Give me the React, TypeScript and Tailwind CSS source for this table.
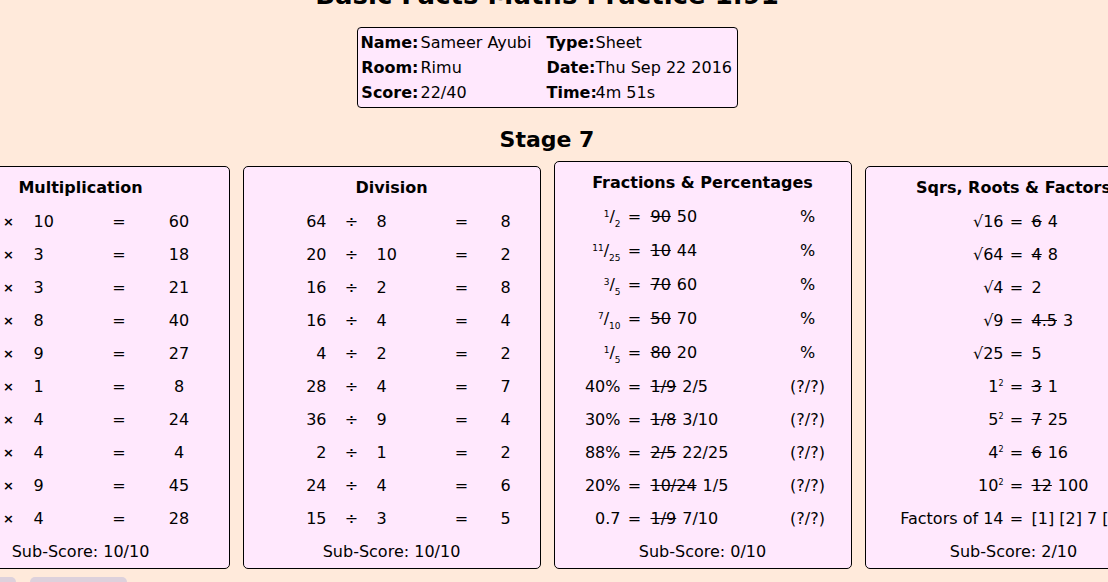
import type { ReactNode } from "react";

type Row = { left: ReactNode; wrong?: string; right: ReactNode; tail?: string };

const Sup = ({ children }: { children: ReactNode }) => (
  <span className="relative top-[-5px] text-[9px]">{children}</span>
);
const Sub = ({ children }: { children: ReactNode }) => (
  <span className="relative top-[5px] text-[9px]">{children}</span>
);
const Frac = ({ n, d }: { n: string; d: string }) => (
  <span>
    <Sup>{n}</Sup>/<Sub>{d}</Sub>
  </span>
);
const Sq = ({ n }: { n: string }) => (
  <span>
    {n}
    <span className="relative top-[-6px] text-[8px]">2</span>
  </span>
);

const Answer = ({ wrong, right }: { wrong?: string; right: ReactNode }) => (
  <>
    {wrong ? <span className="line-through mr-[6px]">{wrong}</span> : null}
    <span>{right}</span>
  </>
);

const multiplication = [
  [6, 10, 60], [6, 3, 18], [7, 3, 21], [5, 8, 40], [3, 9, 27],
  [8, 1, 8], [6, 4, 24], [1, 4, 4], [5, 9, 45], [7, 4, 28]
];

const division = [
  [64, 8, 8], [20, 10, 2], [16, 2, 8], [16, 4, 4], [4, 2, 2],
  [28, 4, 7], [36, 9, 4], [2, 1, 2], [24, 4, 6], [15, 3, 5]
];

const fractions: Row[] = [
  { left: <Frac n="1" d="2" />, wrong: "90", right: "50", tail: "%" },
  { left: <Frac n="11" d="25" />, wrong: "10", right: "44", tail: "%" },
  { left: <Frac n="3" d="5" />, wrong: "70", right: "60", tail: "%" },
  { left: <Frac n="7" d="10" />, wrong: "50", right: "70", tail: "%" },
  { left: <Frac n="1" d="5" />, wrong: "80", right: "20", tail: "%" },
  { left: "40%", wrong: "1/9", right: "2/5", tail: "(?/?)" },
  { left: "30%", wrong: "1/8", right: "3/10", tail: "(?/?)" },
  { left: "88%", wrong: "2/5", right: "22/25", tail: "(?/?)" },
  { left: "20%", wrong: "10/24", right: "1/5", tail: "(?/?)" },
  { left: "0.7", wrong: "1/9", right: "7/10", tail: "(?/?)" }
];

const roots: Row[] = [
  { left: "√16", wrong: "6", right: "4" },
  { left: "√64", wrong: "4", right: "8" },
  { left: "√4", right: "2" },
  { left: "√9", wrong: "4.5", right: "3" },
  { left: "√25", right: "5" },
  { left: <Sq n="1" />, wrong: "3", right: "1" },
  { left: <Sq n="5" />, wrong: "7", right: "25" },
  { left: <Sq n="4" />, wrong: "6", right: "16" },
  { left: <Sq n="10" />, wrong: "12", right: "100" },
  { left: "Factors of 14", right: "[1] [2] 7 [14]" }
];

const Panel = ({ title, score, children }: { title: string; score: string; children: ReactNode }) => (
  <div className="w-[298px] shrink-0 rounded-[5px] border border-black bg-[#ffe8fd] pt-[4px]">
    <div className="h-[34px] text-center text-[16px] font-bold leading-[34px] whitespace-nowrap">{title}</div>
    {children}
    <div className="h-[33px] text-center leading-[33px]">Sub-Score: {score}</div>
  </div>
);

const App = () => {
  return (
    <div className="h-[582px] w-[1108px] overflow-hidden bg-[#ffeadb] text-[16px] text-black font-['DejaVu_Sans',sans-serif]">
      <div className="-mt-[23px] flex w-[1094px] flex-col items-center">
        <h1 className="text-[26px] font-bold leading-[36px] whitespace-nowrap">Basic Facts Maths Practice 1.91</h1>

        <div className="mt-[14px] w-[381px] rounded-[4px] border border-black bg-[#ffe8fd] py-[2px]">
          {[
            ["Name:", "Sameer Ayubi", "Type:", "Sheet"],
            ["Room:", "Rimu", "Date:", "Thu Sep 22 2016"],
            ["Score:", "22/40", "Time:", "4m 51s"]
          ].map(([l1, v1, l2, v2]) => (
            <div key={l1} className="flex h-[25px] items-center whitespace-nowrap">
              <span className="w-[61px] text-right font-bold">{l1}</span>
              <span className="w-[128px] pl-[2px]">{v1}</span>
              <span className="w-[49px] font-bold">{l2}</span>
              <span>{v2}</span>
            </div>
          ))}
        </div>

        <h2 className="mt-[16px] text-[22px] font-bold leading-[32px]">Stage 7</h2>

        <div className="mt-[5px] flex w-full items-end justify-center gap-[13px]">
          <Panel title="Multiplication" score="10/10">
            {multiplication.map(([a, b, c], i) => (
              <div key={i} className="flex h-[33px] items-center">
                <span className="w-[51px] text-right">{a}</span>
                <span className="w-[50px] text-center text-[13px] font-bold">×</span>
                <span className="w-[61px]">{b}</span>
                <span className="w-[49px] text-center">=</span>
                <span className="w-[71px] text-center">{c}</span>
              </div>
            ))}
          </Panel>

          <Panel title="Division" score="10/10">
            {division.map(([a, b, c], i) => (
              <div key={i} className="flex h-[33px] items-center">
                <span className="w-[83px] text-right">{a}</span>
                <span className="w-[50px] text-center">÷</span>
                <span className="w-[61px]">{b}</span>
                <span className="w-[48px] text-center">=</span>
                <span className="w-[40px] text-center">{c}</span>
              </div>
            ))}
          </Panel>

          <Panel title="Fractions & Percentages" score="0/10">
            {fractions.map((r, i) => (
              <div key={i} className={`flex items-center whitespace-nowrap ${i < 5 ? "h-[34px]" : "h-[33px]"}`}>
                <span className="w-[66px] text-right">{r.left}</span>
                <span className="w-[28px] text-center">=</span>
                <span className="w-[118px] pl-[2px]">
                  <Answer wrong={r.wrong} right={r.right} />
                </span>
                <span className="w-[82px] text-center">{r.tail}</span>
              </div>
            ))}
          </Panel>

          <Panel title="Sqrs, Roots & Factors" score="2/10">
            {roots.map((r, i) => (
              <div key={i} className="flex h-[33px] items-center whitespace-nowrap">
                <span className="w-[138px] text-right">{r.left}</span>
                <span className="w-[26px] text-center">=</span>
                <span className="pl-[2px]">
                  <Answer wrong={r.wrong} right={r.right} />
                </span>
              </div>
            ))}
          </Panel>
        </div>

        <div className="mt-[8px] -ml-[60px] flex gap-[14px] self-start">
          <button className="h-[28px] w-[76px] rounded-[5px] bg-[#ddd1dc]" />
          <button className="h-[28px] w-[97px] rounded-[5px] bg-[#ddd1dc]" />
        </div>
      </div>
    </div>
  );
};

export default App;
